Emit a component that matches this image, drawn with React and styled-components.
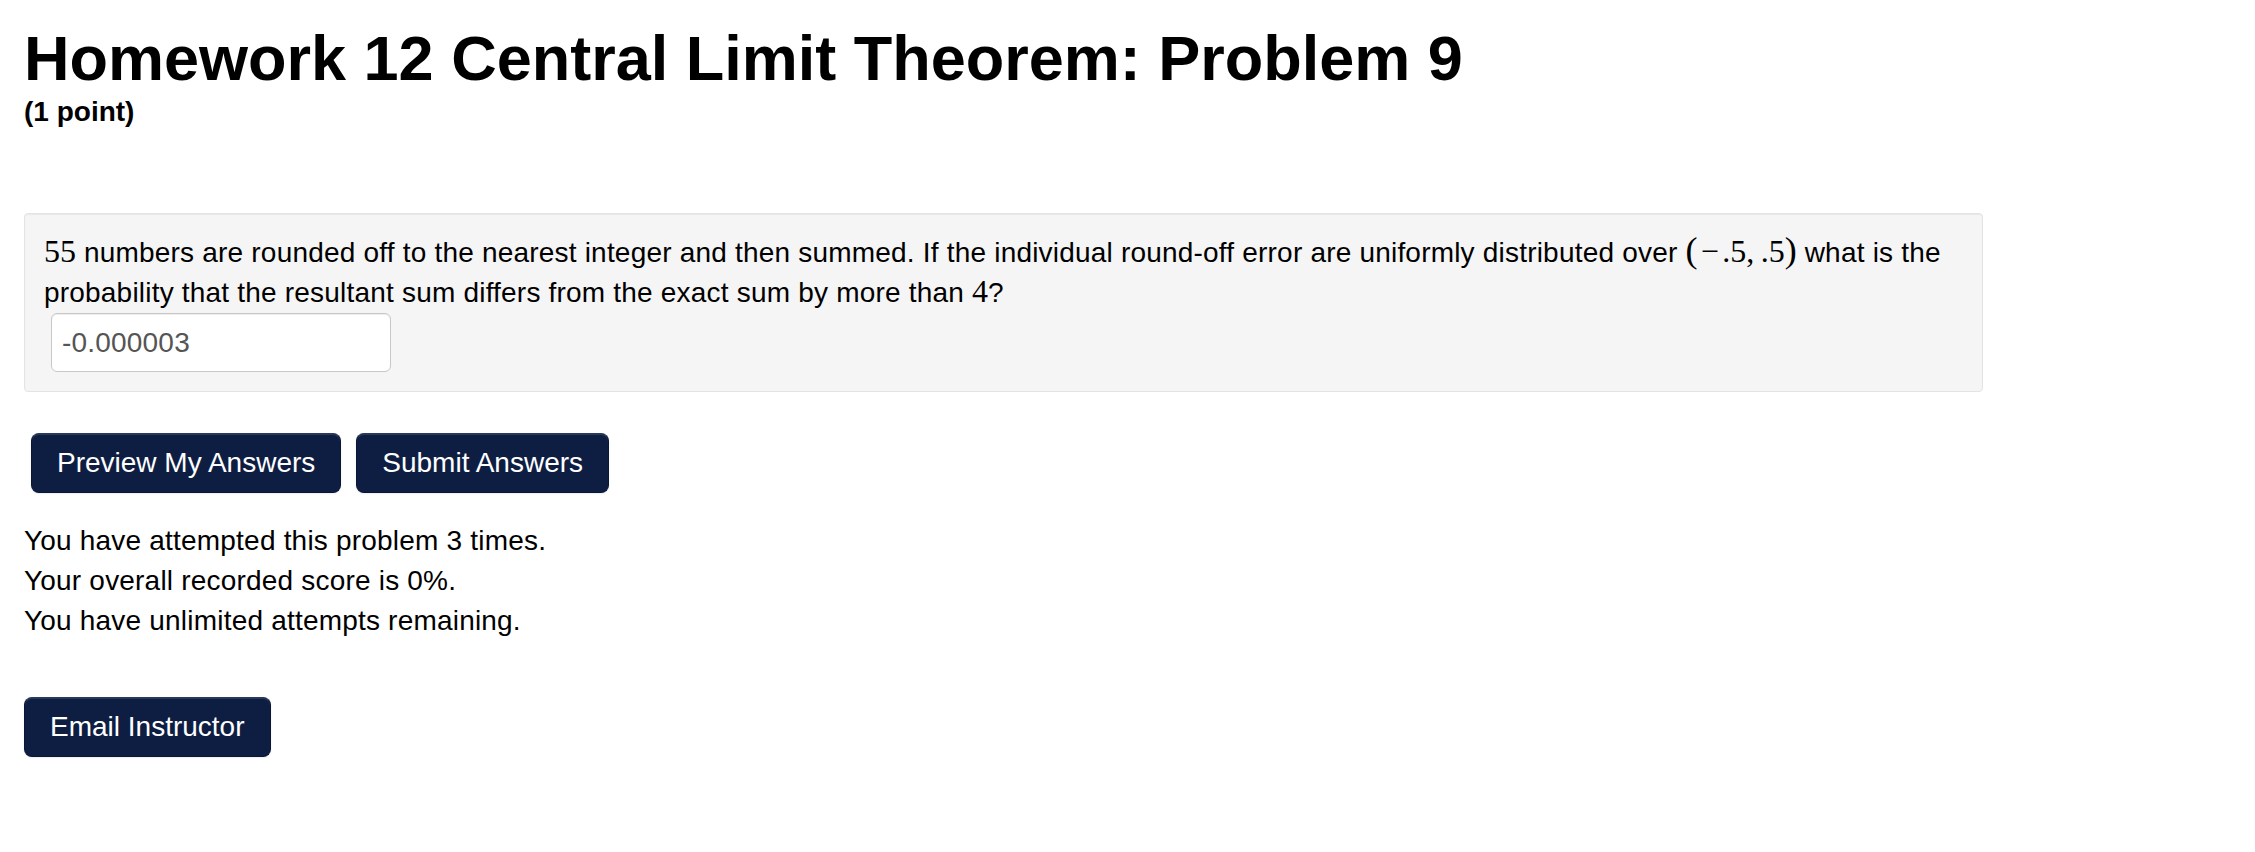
import React from 'react';
import styled, { createGlobalStyle } from 'styled-components';

const GlobalStyle = createGlobalStyle`
  html, body {
    margin: 0;
    padding: 0;
    background: #ffffff;
  }
  body {
    font-family: "Liberation Sans", Arial, Helvetica, sans-serif;
    color: #000;
  }
`;

const Page = styled.div`
  padding: 0 24px 40px;
`;

const Title = styled.h1`
  margin: 23px 0 0;
  font-size: 63px;
  line-height: 70px;
  font-weight: 700;
`;

const Points = styled.div`
  margin-top: 4px;
  font-size: 28px;
  line-height: 30px;
  font-weight: 700;
`;

const Well = styled.div`
  margin-top: 86px;
  width: 1959px;
  box-sizing: border-box;
  padding: 19px;
  background: #f5f5f5;
  border: 1px solid #e3e3e3;
  border-radius: 4px;
  box-shadow: inset 0 1px 1px rgba(0, 0, 0, 0.05);
  font-size: 28px;
  line-height: 40px;
  letter-spacing: 0.2px;
`;

const Question = styled.div``;

const Math = styled.span`
  font-family: "Liberation Serif", "Times New Roman", serif;
  font-size: 32px;
  line-height: 0;
  letter-spacing: 0;
`;

const Paren = styled.span`
  font-size: 36px;
  line-height: 0;
`;

const Minus = styled.span`
  margin: 0 0.107em;
`;

const InputRow = styled.div`
  padding-left: 7px;
`;

const AnswerInput = styled.input`
  display: block;
  width: 340px;
  height: 59px;
  box-sizing: border-box;
  padding: 0 10px;
  font-family: "Liberation Sans", Arial, Helvetica, sans-serif;
  font-size: 28px;
  letter-spacing: 0.2px;
  color: #555;
  background: #fff;
  border: 1px solid #c8c8c8;
  border-radius: 6px;
  box-shadow: inset 0 1px 1px rgba(0, 0, 0, 0.075);
  outline: none;
`;

const ButtonRow = styled.div`
  display: flex;
  gap: 15px;
  margin-top: 41px;
  padding-left: 7px;
`;

const Button = styled.button`
  font-family: "Liberation Sans", Arial, Helvetica, sans-serif;
  font-size: 28px;
  line-height: 40px;
  padding: 9px 25px;
  color: #fff;
  background: #0e1e43;
  border: 1px solid #0a1734;
  border-top-color: #2a3a5c;
  border-radius: 8px;
  box-shadow: inset 0 1px 0 rgba(255, 255, 255, 0.12), 0 1px 2px rgba(0, 0, 0, 0.08);
  cursor: pointer;
`;

const Status = styled.div`
  margin-top: 28px;
  font-size: 28px;
  line-height: 40px;
  letter-spacing: 0.2px;
`;

const EmailRow = styled.div`
  margin-top: 56px;
`;

export default function App() {
  return (
    <>
      <GlobalStyle />
      <Page>
        <Title>Homework 12 Central Limit Theorem: Problem 9</Title>
        <Points>(1 point)</Points>

        <Well>
          <Question>
            <Math>55</Math> numbers are rounded off to the nearest integer and then summed. If the
            individual round-off error are uniformly distributed over{' '}
            <Math>
              <Paren>(</Paren>
              <Minus>−</Minus>.5,&thinsp;.5<Paren>)</Paren>
            </Math>{' '}
            what is the probability that the resultant sum differs from the exact sum by more than{' '}
            <Math>4</Math>?
          </Question>
          <InputRow>
            <AnswerInput defaultValue="-0.000003" />
          </InputRow>
        </Well>

        <ButtonRow>
          <Button>Preview My Answers</Button>
          <Button>Submit Answers</Button>
        </ButtonRow>

        <Status>
          <div>You have attempted this problem 3 times.</div>
          <div>Your overall recorded score is 0%.</div>
          <div>You have unlimited attempts remaining.</div>
        </Status>

        <EmailRow>
          <Button>Email Instructor</Button>
        </EmailRow>
      </Page>
    </>
  );
}
